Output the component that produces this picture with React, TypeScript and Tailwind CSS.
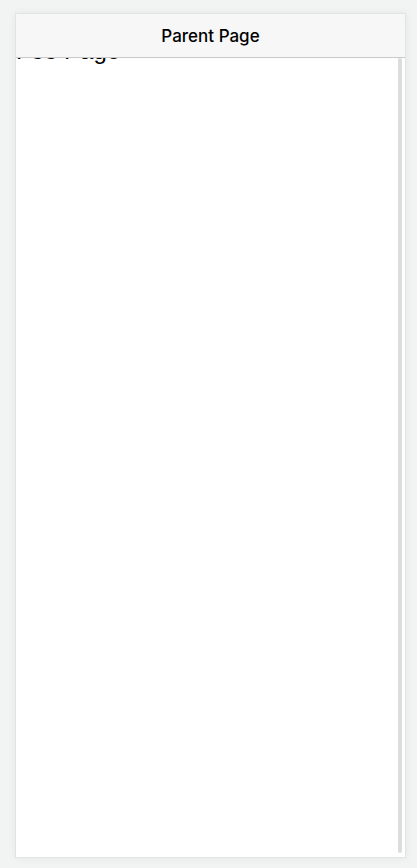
export default function App() {
  return (
    <div className="h-[868px] w-full bg-[#f2f4f3] pt-[13px] pl-[15px] pr-[11px] pb-[10px]">
      {/* Phone frame */}
      <div className="flex h-[845px] w-[391px] flex-col overflow-hidden border border-[#e2e4e3] bg-white shadow-[0_0_8px_rgba(0,0,0,0.06)]">
        {/* Navigation bar */}
        <div className="flex h-[44px] shrink-0 items-center justify-center border-b border-[#c9c9c9] bg-[#f7f7f7] pt-[2px]">
          <span className="font-['Inter','Noto_Sans',sans-serif] text-[17px] font-medium text-black">
            Parent Page
          </span>
        </div>

        {/* Scrolled content */}
        <div className="relative flex-1 overflow-hidden">
          <h1 className="-mt-[21px] font-['Liberation_Sans',Arial,sans-serif] text-[24px] leading-[28px] text-black">
            Foo Page
          </h1>
          {/* scroll thumb */}
          <div className="absolute top-0 right-[3px] bottom-[4px] w-[4px] rounded-full bg-[#dcdcdc]" />
        </div>
      </div>
    </div>
  )
}
